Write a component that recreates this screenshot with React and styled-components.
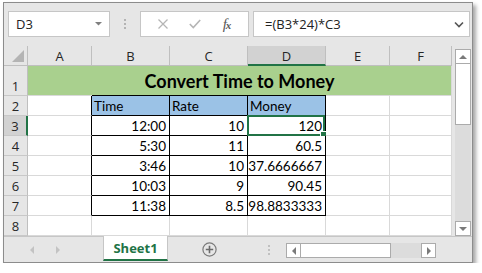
import React from "react";
import styled, { createGlobalStyle } from "styled-components";

const Global = createGlobalStyle`
  html, body { margin: 0; padding: 0; background: #fff; }
  * { box-sizing: border-box; }
`;

const GREEN = "#217346";
const GRID = "#d9d9d9";

const Window = styled.div`
  margin: 2px 0 0 3px;
  width: 470px;
  height: 261px;
  border: 1px solid #8c8c8c;
  background: #e6e6e6;
  box-shadow: 3px 3px 4px rgba(0, 0, 0, 0.35);
  display: flex;
  flex-direction: column;
  overflow: hidden;
`;

const FormulaBar = styled.div`
  height: 43px;
  display: flex;
  align-items: flex-start;
  padding: 8px 2px 0 4px;
  font-family: "Open Sans", "Noto Sans", sans-serif;
`;

const Box = styled.div`
  height: 26px;
  background: #fff;
  border: 1px solid #c6c6c6;
  display: flex;
  align-items: center;
  width: ${(p) => p.$w}px;
  flex: ${(p) => (p.$grow ? 1 : "none")};
  margin-left: ${(p) => p.$ml || 0}px;
  padding: 0 ${(p) => p.$pr || 6}px 0 ${(p) => p.$pl || 6}px;
  font-size: 13px;
  color: #222;
`;

const BoxText = styled.span`
  flex: 1;
  white-space: nowrap;
`;

const Dots = styled.div`
  width: 30px;
  height: 26px;
  display: flex;
  flex-direction: column;
  align-items: center;
  justify-content: center;
  gap: 2px;
  span {
    width: 2px;
    height: 2px;
    background: #b3b3b3;
  }
`;

const IconSlot = styled.div`
  width: ${(p) => p.$w}px;
  display: flex;
  justify-content: center;
  align-items: center;
`;

const Fx = styled.span`
  font-family: "Liberation Serif", serif;
  font-style: italic;
  font-size: 15px;
  color: #595959;
  letter-spacing: -1px;
  small {
    font-size: 11px;
    font-weight: bold;
  }
`;

const Main = styled.div`
  display: flex;
  height: 190px;
`;

const Sheet = styled.div`
  display: grid;
  grid-template-columns: 24px 64px 78px 78px 78px 64px 62px;
  grid-template-rows: 20px 30px repeat(7, 20px);
  width: 448px;
  background: #fff;
`;

const Corner = styled.div`
  background: #e6e6e6;
  border-right: 1px solid #bfbfbf;
  border-bottom: 1px solid #bfbfbf;
  display: flex;
  align-items: flex-end;
  justify-content: flex-end;
  padding: 0 3px 3px 0;
`;

const ColHead = styled.div`
  background: ${(p) => (p.$sel ? "#d2d2d2" : "#e6e6e6")};
  border-right: 1px solid #bfbfbf;
  border-bottom: ${(p) => (p.$sel ? `2px solid ${GREEN}` : "1px solid #bfbfbf")};
  display: flex;
  align-items: center;
  justify-content: center;
  font-family: "Open Sans", sans-serif;
  font-size: 13px;
  color: #262626;
  padding-top: ${(p) => (p.$sel ? 1 : 0)}px;
`;

const RowHead = styled.div`
  background: ${(p) => (p.$sel ? "#d2d2d2" : "#e6e6e6")};
  border-right: ${(p) => (p.$sel ? `2px solid ${GREEN}` : "1px solid #bfbfbf")};
  border-bottom: 1px solid #c8c8c8;
  display: flex;
  align-items: flex-end;
  justify-content: center;
  padding-bottom: 0;
  font-family: "Open Sans", sans-serif;
  font-size: 13px;
  color: #262626;
`;

const Cell = styled.div`
  position: relative;
  background: ${(p) => p.$bg || "#fff"};
  border-right: 1px solid ${(p) => p.$br || GRID};
  border-bottom: 1px solid ${(p) => p.$bb || GRID};
  box-shadow: ${(p) => (p.$top ? "0 -1px 0 #000" : "none")};
  display: flex;
  align-items: flex-end;
  justify-content: ${(p) => (p.$right ? "flex-end" : "flex-start")};
  padding: 0 3px 0 2px;
  font-family: "Lato", "Liberation Sans", sans-serif;
  font-size: 13.5px;
  line-height: 18px;
  color: #000;
  white-space: nowrap;
`;

const Title = styled.div`
  grid-column: span 6;
  background: #a9d08e;
  border-right: 1px solid ${GRID};
  border-bottom: 1px solid ${GRID};
  display: flex;
  align-items: flex-end;
  justify-content: center;
  padding-bottom: 3px;
  font-family: "Lato", "Liberation Sans", sans-serif;
  font-weight: 700;
  font-size: 18px;
  color: #000;
`;

const Selection = styled.div`
  position: absolute;
  left: -1px;
  top: -1px;
  right: 0;
  bottom: -1px;
  border: 2px solid ${GREEN};
  pointer-events: none;
`;

const Handle = styled.div`
  position: absolute;
  right: -4px;
  bottom: -4px;
  width: 7px;
  height: 7px;
  background: ${GREEN};
  border: 1px solid #fff;
`;

const VScroll = styled.div`
  width: 19px;
  padding: 3px 0 0 3px;
  display: flex;
  flex-direction: column;
`;

const Btn = styled.div`
  width: 16px;
  height: 15px;
  background: #fff;
  border: 1px solid #ababab;
  display: flex;
  align-items: center;
  justify-content: center;
  flex: none;
`;

const VThumb = styled.div`
  width: 16px;
  height: 61px;
  background: #fff;
  border: 1px solid #ababab;
  border-top: none;
`;

const VTrack = styled.div`
  flex: 1;
  width: 16px;
  background: #dcdcdc;
`;

const TabBar = styled.div`
  height: 26px;
  border-top: 1px solid #c6c6c6;
  display: flex;
  align-items: flex-start;
  font-family: "Open Sans", sans-serif;
`;

const Nav = styled.div`
  width: 99px;
  height: 25px;
  display: flex;
  align-items: center;
  padding-left: 26px;
  gap: 22px;
`;

const Tab = styled.div`
  margin-top: -1px;
  width: 65px;
  height: 25px;
  background: #fff;
  border-left: 1px solid #c6c6c6;
  border-right: 1px solid #c6c6c6;
  border-bottom: 2px solid ${GREEN};
  display: flex;
  align-items: center;
  justify-content: center;
  color: ${GREEN};
  font-weight: 700;
  font-size: 13px;
  padding-top: 1px;
`;

const AddSheet = styled.div`
  width: 84px;
  height: 25px;
  display: flex;
  align-items: center;
  padding-left: 34px;
`;

const HDots = styled(Dots)`
  width: 34px;
  height: 25px;
  span { background: #c0c0c0; }
`;

const HScroll = styled.div`
  display: flex;
  margin-top: 6px;
  height: 15px;
  width: 150px;
`;

const HBtn = styled(Btn)`
  width: 15px;
  height: 15px;
`;

const HThumb = styled.div`
  width: 90px;
  height: 15px;
  background: #fff;
  border: 1px solid #ababab;
  border-left: none;
`;

const HTrack = styled.div`
  flex: 1;
  background: #dcdcdc;
`;

const Tri = ({ dir, color = "#7a7a7a", s = 4 }) => {
  const pts = {
    up: `0,${s} ${s},0 ${2 * s},${s}`,
    down: `0,0 ${2 * s},0 ${s},${s}`,
    left: `${s},0 ${s},${2 * s} 0,${s}`,
    right: `0,0 ${s},${s} 0,${2 * s}`,
  }[dir];
  const w = dir === "up" || dir === "down" ? 2 * s : s;
  const h = dir === "up" || dir === "down" ? s : 2 * s;
  return (
    <svg width={w} height={h} viewBox={`0 0 ${w} ${h}`}>
      <polygon points={pts} fill={color} />
    </svg>
  );
};

const cols = ["A", "B", "C", "D", "E", "F"];
const data = [
  ["12:00", "10", "120"],
  ["5:30", "11", "60.5"],
  ["3:46", "10", "37.6666667"],
  ["10:03", "9", "90.45"],
  ["11:38", "8.5", "98.8833333"],
];

function Row({ r }) {
  const cells = [];
  cells.push(
    <RowHead key="h" $sel={r === 3}>
      {r}
    </RowHead>
  );
  if (r === 1) {
    cells.push(<Title key="t">Convert Time to Money</Title>);
    return cells;
  }
  const inTable = r >= 2 && r <= 7;
  cols.forEach((c, i) => {
    const tableCol = i >= 1 && i <= 3;
    let content = null;
    let right = false;
    let bg;
    if (inTable && tableCol) {
      if (r === 2) {
        content = ["Time", "Rate", "Money"][i - 1];
        bg = "#9bc2e6";
      } else {
        content = data[r - 3][i - 1];
        right = true;
      }
    }
    const black = inTable && tableCol;
    cells.push(
      <Cell
        key={c}
        $bg={bg}
        $right={right}
        $br={black || (inTable && i === 0) ? "#000" : undefined}
        $bb={black ? "#000" : undefined}
        $top={r === 2 && tableCol}
      >
        {content}
        {r === 3 && c === "D" && (
          <Selection>
            <Handle />
          </Selection>
        )}
      </Cell>
    );
  });
  return cells;
}

export default function App() {
  return (
    <>
      <Global />
      <Window>
        <FormulaBar>
          <Box $w={102} $pl={7} $pr={7}>
            <BoxText>D3</BoxText>
            <Tri dir="down" color="#7f7f7f" s={3.5} />
          </Box>
          <Dots>
            <span />
            <span />
            <span />
          </Dots>
          <Box $w={109} $pl={0} $pr={0}>
            <IconSlot $w={37}>
              <svg width="10" height="10" viewBox="0 0 10 10">
                <path d="M0.5 0.5 L9.5 9.5 M9.5 0.5 L0.5 9.5" stroke="#b5b5b5" strokeWidth="1.3" />
              </svg>
            </IconSlot>
            <IconSlot $w={35}>
              <svg width="12" height="10" viewBox="0 0 12 10">
                <path d="M0.8 5 L4.3 8.5 L11.2 1" stroke="#b5b5b5" strokeWidth="1.6" fill="none" />
              </svg>
            </IconSlot>
            <IconSlot $w={35}>
              <Fx>
                f<small>x</small>
              </Fx>
            </IconSlot>
          </Box>
          <Box $grow $ml={4} $pl={11} $pr={5}>
            <BoxText>=(B3*24)*C3</BoxText>
            <svg width="10" height="7" viewBox="0 0 10 7">
              <path d="M1 1.5 L5 5.5 L9 1.5" stroke="#555" strokeWidth="1.6" fill="none" />
            </svg>
          </Box>
        </FormulaBar>
        <Main>
          <Sheet>
            <Corner>
              <svg width="12" height="12" viewBox="0 0 12 12">
                <polygon points="12,0 12,12 0,12" fill="#b4b4b4" />
              </svg>
            </Corner>
            {cols.map((c) => (
              <ColHead key={c} $sel={c === "D"}>
                {c}
              </ColHead>
            ))}
            {[1, 2, 3, 4, 5, 6, 7, 8].map((r) => (
              <Row key={r} r={r} />
            ))}
          </Sheet>
          <VScroll>
            <Btn>
              <Tri dir="up" color="#7a7a7a" s={4} />
            </Btn>
            <VThumb />
            <VTrack />
            <Btn>
              <Tri dir="down" color="#7a7a7a" s={4} />
            </Btn>
          </VScroll>
        </Main>
        <TabBar>
          <Nav>
            <Tri dir="left" color="#c3c3c3" s={4} />
            <Tri dir="right" color="#c3c3c3" s={4} />
          </Nav>
          <Tab>Sheet1</Tab>
          <AddSheet>
            <svg width="15" height="15" viewBox="0 0 15 15">
              <circle cx="7.5" cy="7.5" r="6.6" stroke="#7a7a7a" strokeWidth="1.2" fill="none" />
              <path d="M7.5 3.8 V11.2 M3.8 7.5 H11.2" stroke="#6a6a6a" strokeWidth="1.6" />
            </svg>
          </AddSheet>
          <HDots>
            <span />
            <span />
            <span />
          </HDots>
          <HScroll>
            <HBtn>
              <Tri dir="left" color="#7a7a7a" s={4} />
            </HBtn>
            <HThumb />
            <HTrack />
            <HBtn>
              <Tri dir="right" color="#7a7a7a" s={4} />
            </HBtn>
          </HScroll>
        </TabBar>
      </Window>
    </>
  );
}
